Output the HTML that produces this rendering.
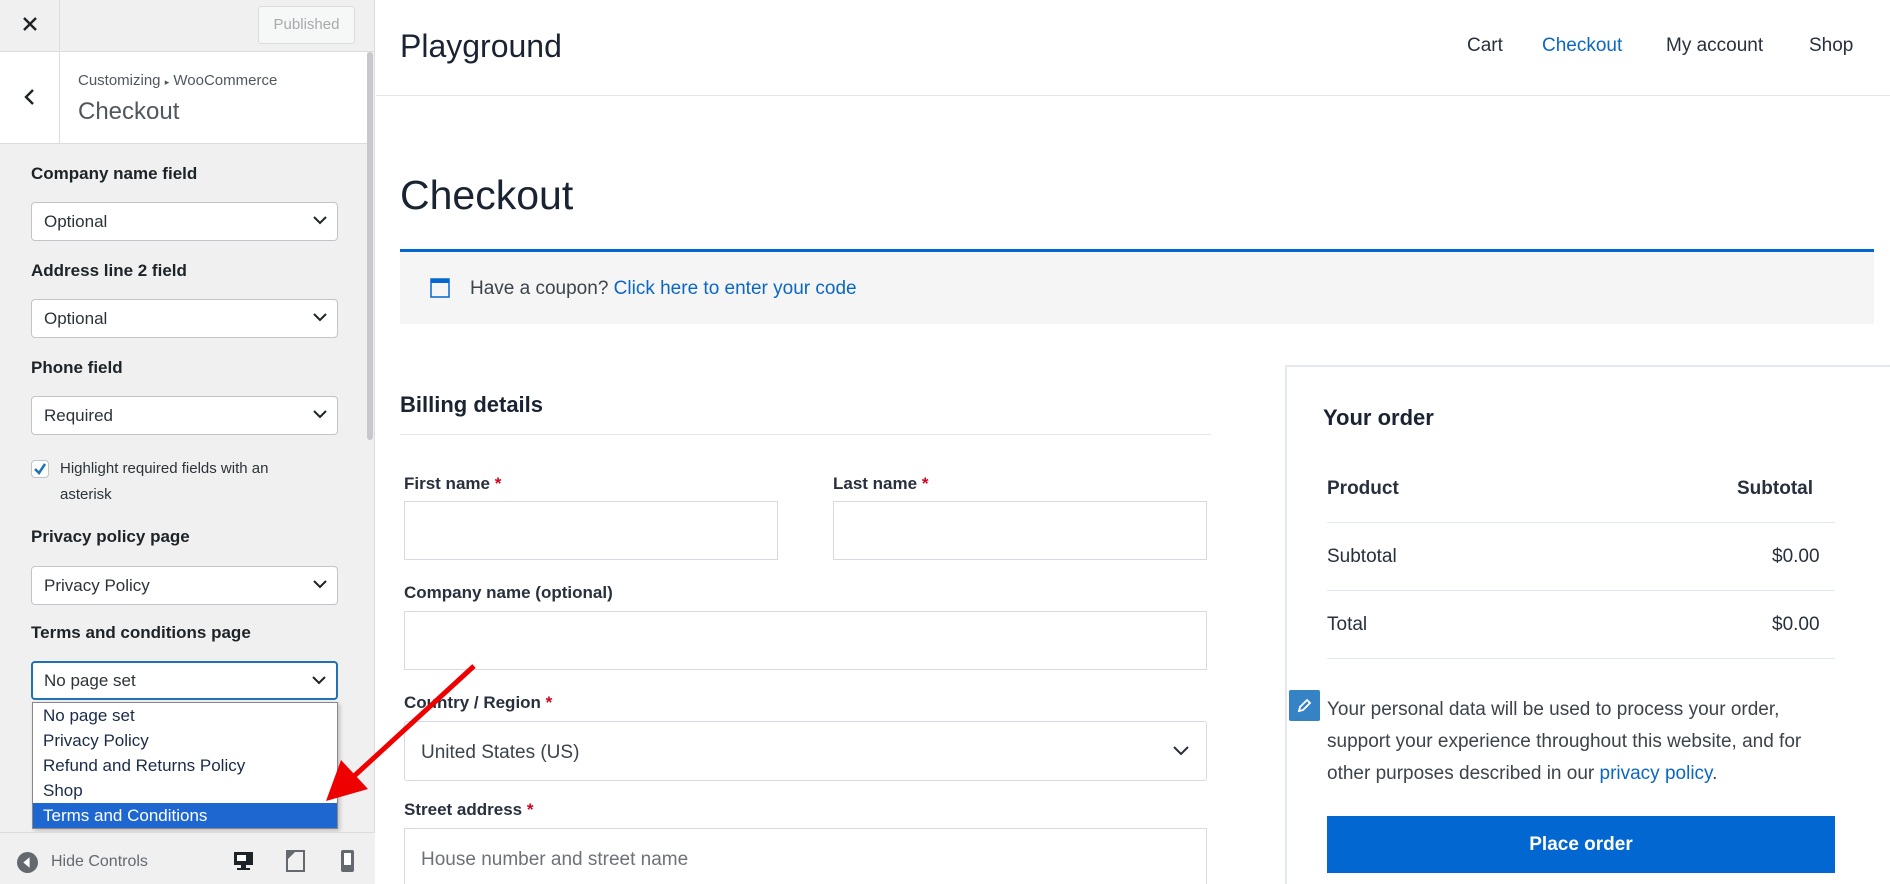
<!DOCTYPE html>
<html><head><meta charset="utf-8"><style>
*{box-sizing:border-box;margin:0;padding:0}
html,body{width:1890px;height:884px;overflow:hidden}
body{position:relative;font-family:"Liberation Sans",sans-serif;background:#fff;color:#28303d}
.a{position:absolute;white-space:nowrap}
#side{position:absolute;left:0;top:0;width:375px;height:884px;background:#f0f0f1;border-right:1px solid #dcdcde}
.lbl{font-size:17px;font-weight:bold;color:#1d2327;left:31px}
.sel{position:absolute;left:31px;width:307px;height:39px;background:#fff;border:1px solid #c3c4c7;border-radius:4px;font-size:17px;color:#2c3338;padding:0 12px;line-height:37px}
.sel svg{position:absolute;right:10px;top:13px}
.flbl{font-size:17px;font-weight:bold;color:#28303d}
.inp{position:absolute;background:#fff;border:1px solid #dcd7e3}
.star{color:#d1001f}
</style></head><body>
<div id="side">
 <div class="a" style="left:0;top:0;width:375px;height:52px;border-bottom:1px solid #dcdcde"></div>
 <div class="a" style="left:59px;top:0;width:1px;height:144px;background:#dcdcde"></div>
 <svg class="a" style="left:22px;top:16px" width="16" height="16" viewBox="0 0 16 16"><path d="M2 2L14 14M14 2L2 14" stroke="#1d2327" stroke-width="2.4"/></svg>
 <div class="a" style="left:258px;top:6px;width:97px;height:38px;border:1px solid #dcdcde;border-radius:3px;background:#f6f7f7;color:#a7aaad;font-size:15px;text-align:center;line-height:36px">Published</div>
 <div class="a" style="left:0;top:52px;width:367px;height:92px;background:#fff;border-bottom:1px solid #dcdcde"></div>
 <div class="a" style="left:59px;top:52px;width:1px;height:92px;background:#dcdcde"></div>
 <svg class="a" style="left:23px;top:88px" width="12" height="18" viewBox="0 0 12 18"><path d="M10 2L3 9L10 16" stroke="#1d2327" stroke-width="2.4" fill="none"/></svg>
 <div class="a" style="left:78px;top:72px;font-size:15px;color:#50575e">Customizing <span style="font-size:9px">▸</span> WooCommerce</div>
 <div class="a" style="left:78px;top:98px;font-size:24px;color:#50575e;font-weight:300">Checkout</div>
 <div class="a" style="left:367px;top:52px;width:6px;height:388px;background:#c8c8cc;border-radius:3px"></div>

 <div class="a lbl" style="top:164px">Company name field</div>
 <div class="sel" style="top:202px">Optional<svg width="14" height="9" viewBox="0 0 14 9"><path d="M1 1L7 7L13 1" stroke="#1d2327" stroke-width="2" fill="none"/></svg></div>
 <div class="a lbl" style="top:261px">Address line 2 field</div>
 <div class="sel" style="top:299px">Optional<svg width="14" height="9" viewBox="0 0 14 9"><path d="M1 1L7 7L13 1" stroke="#1d2327" stroke-width="2" fill="none"/></svg></div>
 <div class="a lbl" style="top:358px">Phone field</div>
 <div class="sel" style="top:396px">Required<svg width="14" height="9" viewBox="0 0 14 9"><path d="M1 1L7 7L13 1" stroke="#1d2327" stroke-width="2" fill="none"/></svg></div>
 <div class="a" style="left:31px;top:460px;width:18px;height:18px;background:#fff;border:1px solid #c3c4c7;border-radius:4px"></div>
 <svg class="a" style="left:33px;top:462px" width="14" height="14" viewBox="0 0 14 14"><path d="M2 7L6 11L12 2" stroke="#2271b1" stroke-width="2.5" fill="none"/></svg>
 <div class="a" style="left:60px;top:456px;font-size:15px;color:#2c3338;line-height:26px">Highlight required fields with an<br>asterisk</div>
 <div class="a lbl" style="top:527px">Privacy policy page</div>
 <div class="sel" style="top:566px">Privacy Policy<svg width="14" height="9" viewBox="0 0 14 9"><path d="M1 1L7 7L13 1" stroke="#1d2327" stroke-width="2" fill="none"/></svg></div>
 <div class="a lbl" style="top:623px">Terms and conditions page</div>
 <div class="sel" style="top:661px;border:2px solid #2271b1;line-height:36px;padding-left:11px">No page set<svg width="14" height="9" viewBox="0 0 14 9"><path d="M1 1L7 7L13 1" stroke="#1d2327" stroke-width="2" fill="none"/></svg></div>
 <div class="a" style="left:32px;top:702px;width:306px;height:127px;background:#fff;border:1px solid #888;box-shadow:2px 2px 4px rgba(0,0,0,.2);font-size:17px;color:#1a2b48;line-height:25px">
  <div style="padding-left:10px">No page set</div>
  <div style="padding-left:10px">Privacy Policy</div>
  <div style="padding-left:10px">Refund and Returns Policy</div>
  <div style="padding-left:10px">Shop</div>
  <div style="padding-left:10px;background:#1e66d0;color:#fff">Terms and Conditions</div>
 </div>
 <div class="a" style="left:0;top:832px;width:375px;height:52px;border-top:1px solid #dcdcde;background:#f0f0f1"></div>
 <svg class="a" style="left:17px;top:852px" width="21" height="21" viewBox="0 0 20 20"><circle cx="10" cy="10" r="10" fill="#646970"/><path d="M12 5L6 10L12 15Z" fill="#fff"/></svg>
 <div class="a" style="left:51px;top:853px;font-size:16px;color:#646970">Hide Controls</div>
 <svg class="a" style="left:233px;top:851px" width="21" height="20" viewBox="0 0 21 20"><rect x="1" y="1" width="19" height="13" fill="#1d2327"/><rect x="4" y="4" width="9" height="6" fill="#fff"/><rect x="8" y="14" width="5" height="3" fill="#1d2327"/><rect x="4" y="17" width="13" height="2" fill="#1d2327"/></svg>
 <svg class="a" style="left:286px;top:850px" width="19" height="22" viewBox="0 0 19 22"><rect x="1" y="1" width="17" height="20" fill="none" stroke="#646970" stroke-width="2"/><path d="M2 2H9L2 9Z" fill="#646970"/></svg>
 <svg class="a" style="left:341px;top:850px" width="13" height="22" viewBox="0 0 13 22"><rect x="0" y="0" width="13" height="22" rx="2" fill="#646970"/><rect x="3" y="3" width="7" height="12" fill="#fff"/></svg>
</div>

<div class="a" style="left:400px;top:28px;font-size:32px;color:#1a2332">Playground</div>
<div class="a" style="left:1467px;top:35px;font-size:19px;color:#28303d">Cart</div>
<div class="a" style="left:1542px;top:35px;font-size:19px;color:#0b67c2">Checkout</div>
<div class="a" style="left:1666px;top:35px;font-size:19px;color:#28303d">My account</div>
<div class="a" style="left:1809px;top:35px;font-size:19px;color:#28303d">Shop</div>
<div class="a" style="left:376px;top:95px;width:1514px;height:1px;background:#e5e5e5"></div>

<div class="a" style="left:400px;top:172px;font-size:41px;color:#1a2332">Checkout</div>
<div class="a" style="left:400px;top:249px;width:1474px;height:75px;background:#f5f5f5;border-top:3px solid #0367d2"></div>
<svg class="a" style="left:430px;top:278px" width="20" height="20" viewBox="0 0 20 20"><rect x="1" y="1" width="18" height="18" fill="none" stroke="#0367d2" stroke-width="1.5"/><rect x="1" y="1" width="18" height="4" fill="#0367d2"/></svg>
<div class="a" style="left:470px;top:278px;font-size:19px;color:#3c434a">Have a coupon? <span style="color:#0b67c2">Click here to enter your code</span></div>

<div class="a" style="left:400px;top:392px;font-size:22px;font-weight:bold;color:#1a2332">Billing details</div>
<div class="a" style="left:400px;top:434px;width:811px;height:1px;background:#e5e5e8"></div>

<div class="a flbl" style="left:404px;top:474px">First name <span class="star">*</span></div>
<div class="inp" style="left:404px;top:501px;width:374px;height:59px"></div>
<div class="a flbl" style="left:833px;top:474px">Last name <span class="star">*</span></div>
<div class="inp" style="left:833px;top:501px;width:374px;height:59px"></div>
<div class="a flbl" style="left:404px;top:583px">Company name (optional)</div>
<div class="inp" style="left:404px;top:611px;width:803px;height:59px"></div>
<div class="a flbl" style="left:404px;top:693px">Country / Region <span class="star">*</span></div>
<div class="inp" style="left:404px;top:721px;width:803px;height:60px;border-radius:3px"></div>
<div class="a" style="left:421px;top:742px;font-size:19px;color:#3c434a">United States (US)</div>
<svg class="a" style="left:1173px;top:746px" width="16" height="10" viewBox="0 0 16 10"><path d="M1 1L8 8L15 1" stroke="#28303d" stroke-width="2" fill="none"/></svg>
<div class="a flbl" style="left:404px;top:800px">Street address <span class="star">*</span></div>
<div class="inp" style="left:404px;top:828px;width:803px;height:70px"></div>
<div class="a" style="left:421px;top:849px;font-size:19px;color:#6d7278">House number and street name</div>

<div class="a" style="left:1285px;top:365px;width:610px;height:540px;border:2px solid #e4e8f0"></div>
<div class="a" style="left:1323px;top:405px;font-size:22px;font-weight:bold;color:#1a2332">Your order</div>
<div class="a" style="left:1327px;top:478px;font-size:19px;font-weight:bold;color:#28303d">Product</div>
<div class="a" style="left:1737px;top:478px;font-size:19px;font-weight:bold;color:#28303d">Subtotal</div>
<div class="a" style="left:1327px;top:522px;width:508px;height:1px;background:#e4e8f0"></div>
<div class="a" style="left:1327px;top:546px;font-size:19px;color:#28303d">Subtotal</div>
<div class="a" style="left:1772px;top:546px;font-size:19px;color:#28303d">$0.00</div>
<div class="a" style="left:1327px;top:590px;width:508px;height:1px;background:#e4e8f0"></div>
<div class="a" style="left:1327px;top:614px;font-size:19px;color:#28303d">Total</div>
<div class="a" style="left:1772px;top:614px;font-size:19px;color:#28303d">$0.00</div>
<div class="a" style="left:1327px;top:658px;width:508px;height:1px;background:#e4e8f0"></div>
<div class="a" style="left:1289px;top:690px;width:31px;height:31px;background:#3582c4;border-radius:2px"></div>
<svg class="a" style="left:1296px;top:697px" width="17" height="17" viewBox="0 0 17 17"><path d="M3 14L4 10L11 3L14 6L7 13Z" fill="none" stroke="#fff" stroke-width="1.8"/></svg>
<div class="a" style="left:1327px;top:694px;font-size:19px;color:#3c434a;line-height:32px;white-space:normal;width:520px">Your personal data will be used to process your order, support your experience throughout this website, and for other purposes described in our <span style="color:#0b67c2">privacy policy</span>.</div>
<div class="a" style="left:1327px;top:816px;width:508px;height:57px;background:#0367d2;color:#fff;font-size:19px;font-weight:bold;text-align:center;line-height:57px">Place order</div>

<svg class="a" style="left:0;top:0" width="1890" height="884" viewBox="0 0 1890 884">
 <line x1="474" y1="666" x2="352" y2="778" stroke="#e00" stroke-width="5"/>
 <polygon points="326,801 341,760 368,789" fill="#e00"/>
</svg>
</body></html>
